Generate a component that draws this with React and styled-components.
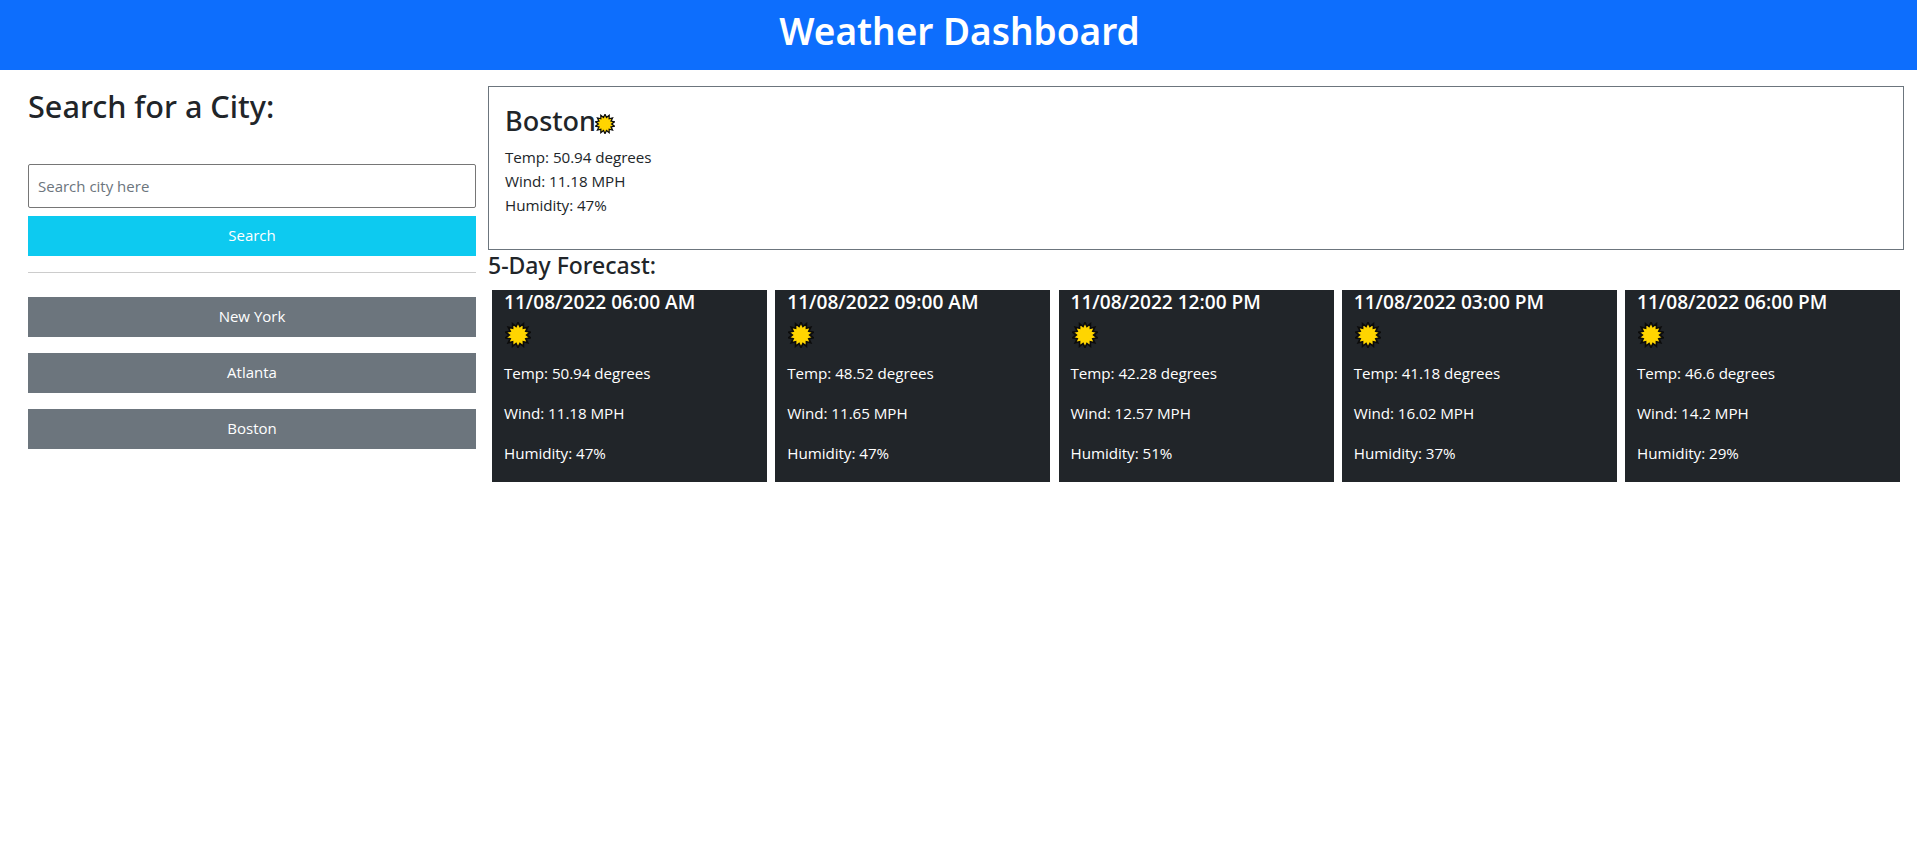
import React from "react";
import styled, { createGlobalStyle } from "styled-components";

const Global = createGlobalStyle`
  * { box-sizing: border-box; }
  html, body { margin: 0; padding: 0; background: #fff; }
  body { font-family: "Open Sans", "Noto Sans", "Liberation Sans", sans-serif; font-size: 16px; line-height: 1.5; color: #212529; }
`;

const Header = styled.header`
  height: 70px; background: #0d6efd; color: #fff; display: flex; justify-content: center; padding: 8px 0 0 2px;
`;
const Title = styled.h1`
  margin: 0; font-family: "Noto Sans", sans-serif; font-size: 37px; font-weight: 600; line-height: 46px;
`;
const Page = styled.main`
  display: flex; align-items: flex-start; padding: 0 13px 0 28px; gap: 12px;
`;
const Sidebar = styled.aside`
  width: 448px; flex: none; display: flex; flex-direction: column; padding-top: 16px;
`;
const SearchTitle = styled.h2`
  margin: 0; font-family: "Noto Sans", sans-serif; font-size: 30.6px; font-weight: 500; line-height: 40px; height: 78px;
`;
const SearchInput = styled.input`
  display: block; width: 100%; height: 44px; padding: 0 9px; border: 1px solid #767676; border-radius: 2px;
  font: inherit; font-size: 15px; color: #212529; outline: none;
  &::placeholder { color: #6c757d; opacity: 1; }
`;
const Button = styled.button`
  display: block; width: 100%; height: 40px; padding: 0 0 1px; border: 0; color: #fff;
  background: ${(p) => (p.$variant === "info" ? "#0dcaf0" : "#6c757d")};
  font: inherit; font-size: 15px;
`;
const SearchButton = styled(Button)`
  margin-top: 8px;
`;
const Divider = styled.hr`
  margin: 16px 0 0; border: 0; border-top: 1px solid #ccc;
`;
const History = styled.div`
  display: flex; flex-direction: column; gap: 16px; margin-top: 24px;
`;
const Content = styled.section`
  flex: 1; min-width: 0; padding-top: 16px;
`;
const Current = styled.div`
  height: 164px; border: 1px solid #6c757d; padding: 15px 16px;
`;
const CityRow = styled.div`
  display: flex; align-items: center; height: 38px; margin-bottom: 5px;
`;
const CityName = styled.h3`
  margin: 0; font-family: "Noto Sans", sans-serif; font-size: 27px; font-weight: 500; line-height: 38px;
`;
const CitySun = styled.span`
  display: flex; margin: 6px 0 0 -1px;
`;
const StatLine = styled.div`
  font-size: 15.2px; line-height: 24px; letter-spacing: -0.05px;
`;
const ForecastTitle = styled.h4`
  margin: 0; font-family: "Noto Sans", sans-serif; font-size: 23px; font-weight: 500; line-height: 30px; height: 40px;
`;
const Cards = styled.div`
  display: grid; grid-template-columns: repeat(5, 275px); justify-content: space-between; padding: 0 4px;
`;
const Card = styled.article`
  background: #212529; color: #fff; height: 192px; padding: 0 12px;
`;
const CardDate = styled.div`
  font-size: 19.1px; font-weight: 600; line-height: 25px;
`;
const CardIcon = styled.div`
  height: 28px; display: flex; align-items: center; margin: 6px 0 0; padding-left: 1px;
`;
const CardStat = styled.p`
  margin: 12px 0 0; font-size: 15.2px; line-height: 24px; letter-spacing: -0.05px;
  & + & { margin-top: 16px; }
`;

function sunPoints(n, R, r, c) {
  const pts = [];
  for (let i = 0; i < n * 2; i++) {
    const a = (Math.PI * i) / n - Math.PI / 2;
    const rad = i % 2 === 0 ? R : r;
    pts.push(`${(c + rad * Math.cos(a)).toFixed(2)},${(c + rad * Math.sin(a)).toFixed(2)}`);
  }
  return pts.join(" ");
}

const Sun = ({ size }) => (
  <svg width={size} height={size} viewBox="0 0 24 24" aria-hidden="true">
    <polygon points={sunPoints(14, 11.6, 8, 12)} fill="#ffd500" stroke="#0b0b0b" strokeWidth="1.5" strokeLinejoin="miter" />
  </svg>
);

const forecast = [
  { date: "11/08/2022 06:00 AM", temp: "50.94", wind: "11.18", hum: "47" },
  { date: "11/08/2022 09:00 AM", temp: "48.52", wind: "11.65", hum: "47" },
  { date: "11/08/2022 12:00 PM", temp: "42.28", wind: "12.57", hum: "51" },
  { date: "11/08/2022 03:00 PM", temp: "41.18", wind: "16.02", hum: "37" },
  { date: "11/08/2022 06:00 PM", temp: "46.6", wind: "14.2", hum: "29" },
];

export default function App() {
  return (
    <>
      <Global />
      <Header><Title>Weather Dashboard</Title></Header>
      <Page>
        <Sidebar>
          <SearchTitle>Search for a City:</SearchTitle>
          <SearchInput placeholder="Search city here" />
          <SearchButton $variant="info">Search</SearchButton>
          <Divider />
          <History>
            {["New York", "Atlanta", "Boston"].map((c) => <Button key={c}>{c}</Button>)}
          </History>
        </Sidebar>
        <Content>
          <Current>
            <CityRow><CityName>Boston</CityName><CitySun><Sun size={20} /></CitySun></CityRow>
            <StatLine>Temp: 50.94 degrees</StatLine>
            <StatLine>Wind: 11.18 MPH</StatLine>
            <StatLine>Humidity: 47%</StatLine>
          </Current>
          <ForecastTitle>5-Day Forecast:</ForecastTitle>
          <Cards>
            {forecast.map((f) => (
              <Card key={f.date}>
                <CardDate>{f.date}</CardDate>
                <CardIcon><Sun size={26} /></CardIcon>
                <CardStat>Temp: {f.temp} degrees</CardStat>
                <CardStat>Wind: {f.wind} MPH</CardStat>
                <CardStat>Humidity: {f.hum}%</CardStat>
              </Card>
            ))}
          </Cards>
        </Content>
      </Page>
    </>
  );
}
